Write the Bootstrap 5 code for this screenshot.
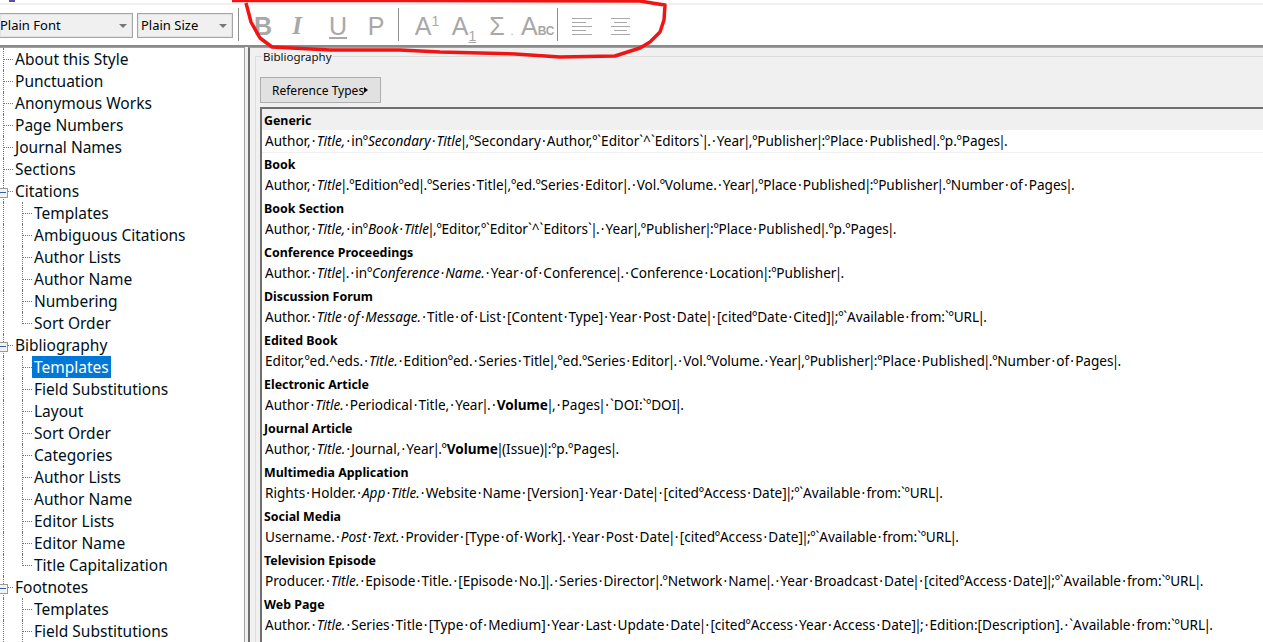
<!DOCTYPE html>
<html lang="en">
<head>
<meta charset="utf-8">
<title>Style editor</title>
<link href="https://cdn.jsdelivr.net/npm/bootstrap@5.3.0/dist/css/bootstrap.min.css" rel="stylesheet">
<style>
html,body{height:642px;overflow:hidden;background:#f0f0f0;}
body{font-family:"Noto Sans","Open Sans",sans-serif;color:#000;position:relative;}
.top-strip{height:5px;background:linear-gradient(#fff 0,#fff 3px,#f0f0f0 3px);padding-left:9px;}
.app-mark{display:block;width:6px;height:2px;background:#5a4fb0;}
.tool-bar{height:42px;background:#fff;border-bottom:2px solid #8a8a8a;}
.fake-select{height:25px;margin-top:8px;border:1px solid #a5a5a5;outline:1px solid #e3e3e3;outline-offset:-2px;background:#f0f0f0;font-size:13px;line-height:23px;padding-left:3px;white-space:nowrap;overflow:hidden;}
.font-sel{width:134px;margin-left:-1px;padding-left:0;}
.size-sel{width:96px;margin-left:4px;}
.caret-down{width:0;height:0;border:4px solid transparent;border-top:4px solid #777;border-bottom:0;margin-right:5px;}
.v-sep{width:1px;height:33px;background:#8e8e8e;margin-top:3px;flex:none;}
.tb-group{padding-top:8px;}
.tb-glyph{color:#a8a8a8;font-size:25px;line-height:26px;flex:none;text-align:center;font-family:"Liberation Sans",sans-serif;white-space:nowrap;}
.tb-serif{font-family:"Liberation Serif",serif;}
.tb-sup{font-size:14px;position:relative;top:-9px;}
.tb-sub{font-size:14px;position:relative;top:6px;text-decoration:underline;}
.tb-small{font-size:12px;font-weight:700;letter-spacing:-.5px;}
.tb-dot{font-size:11px;padding-top:5px;}
.tb-align{margin-top:9px;flex:none;}
.tree-pane{width:245px;height:595px;background:#fff;border:1px solid #a0a0a0;border-width:1px 1px 0 0;overflow:hidden;flex:none;}
.tree-row{height:22px;line-height:22px;font-size:15.5px;position:relative;padding-left:15px;white-space:nowrap;color:#001018;}
.tree-row::before{content:"";position:absolute;left:3px;top:0;bottom:0;border-left:1px dotted #777;}
.tree-row::after{content:"";position:absolute;left:4px;top:11px;width:9px;border-top:1px dotted #777;}
.tree-kid{padding-left:34px;}
.tree-kid::after{left:23px;}
.kid-line{position:absolute;left:22px;top:0;bottom:0;border-left:1px dotted #777;}
.kid-end{bottom:10px;}
.tree-box{position:absolute;left:-2px;top:8px;width:10px;height:10px;background:#f2f2f2;border:1px solid #9a9a9a;z-index:1;}
.tree-box::after{content:"";position:absolute;left:0;right:1px;top:3px;border-top:1px solid #3a5fa8;}
.tree-sel{background:#0078d7;color:#fff;padding:0 2px 0 2px;margin-left:-2px;display:inline-block;height:22px;}
.right-pane{margin-left:3px;flex:1;min-width:0;border-left:2px solid #6f6f6f;border-top:1px solid #a0a0a0;height:595px;padding:8px 0 0 5px;overflow:hidden;}
.group-frame{border:1px solid #dcdcdc;border-width:1px 0 0 1px;height:600px;padding:0 0 0 4px;position:relative;}
.group-label{position:absolute;left:6px;top:-7px;font-size:11.5px;line-height:14px;background:#f0f0f0;padding:0 1px;color:#111;}
.ref-btn{margin-top:20px;width:121px;height:26px;background:#e1e1e1;border:1px solid #adadad;border-radius:0;font-size:12px;line-height:26px;padding:0 0 0 11px;text-align:left;color:#000;white-space:nowrap;}
.ref-tri{display:inline-block;width:0;height:0;border:3px solid transparent;border-left:4px solid #000;border-right:0;vertical-align:2px;}
.tpl-box{margin-top:4px;background:#fff;border:2px solid #6f6f6f;border-width:2px 0 0 2px;height:560px;}
.tpl-item{height:44px;padding:3px 0 0 2px;white-space:nowrap;overflow:hidden;}
.tpl-on{background:#f0f0f0;}
.tpl-head{font-size:12.4px;font-weight:700;line-height:18px;height:18px;}
.tpl-line{font-size:13.6px;line-height:22px;height:22px;margin-left:-2px;padding-left:3px;background:#fff;}
.tpl-bar{margin:0 -1.75px;}
.tpl-dot{padding:0 1.15px;}
.tpl-deg{margin:0 -.5px;}
.red-scribble{position:absolute;left:0;top:0;pointer-events:none;z-index:5;}
</style>
</head>
<body>
<div class="top-strip"><span class="app-mark"></span></div>
<div class="tool-bar d-flex align-items-start">
  <div class="fake-select font-sel d-flex justify-content-between align-items-center"><span>Plain Font</span><span class="caret-down"></span></div>
  <div class="fake-select size-sel d-flex justify-content-between align-items-center"><span>Plain Size</span><span class="caret-down"></span></div>
  <div class="v-sep" style="margin-left:5px"></div>
  <div class="d-flex tb-group" style="margin-left:13px">
    <span class="tb-glyph fw-bold" style="width:22px">B</span>
    <span class="tb-glyph tb-serif fw-bold fst-italic" style="width:16px;margin-left:15px">I</span>
    <span class="tb-glyph text-decoration-underline" style="width:18px;margin-left:24px">U</span>
    <span class="tb-glyph" style="width:18px;margin-left:20px">P</span>
  </div>
  <div class="v-sep" style="margin-left:13px"></div>
  <div class="d-flex tb-group" style="margin-left:15px">
    <span class="tb-glyph" style="width:26px">A<span class="tb-sup">1</span></span>
    <span class="tb-glyph" style="width:26px;margin-left:11px">A<span class="tb-sub">1</span></span>
    <span class="tb-glyph" style="width:18px;margin-left:11px">Σ</span>
    <span class="tb-glyph tb-dot" style="width:8px;margin-left:2px">.</span>
    <span class="tb-glyph" style="width:30px;margin-left:5px">A<span class="tb-small">BC</span></span>
  </div>
  <div class="v-sep" style="margin-left:6px"></div>
  <svg class="tb-align" width="60" height="24" viewBox="0 0 60 24" style="margin-left:14px" aria-hidden="true">
    <g stroke="#a8a8a8" stroke-width="1">
      <path d="M0 4.5H20M0 8.5H14M0 12.5H20M0 16.5H14M0 20.5H20"/>
      <path d="M39 4.5H58M42 8.5H55M39 12.5H58M42 16.5H55M39 20.5H58"/>
    </g>
  </svg>
</div>
<div class="d-flex">
  <div class="tree-pane">
    <div class="tree-row">About this Style</div>
    <div class="tree-row">Punctuation</div>
    <div class="tree-row">Anonymous Works</div>
    <div class="tree-row">Page Numbers</div>
    <div class="tree-row">Journal Names</div>
    <div class="tree-row">Sections</div>
    <div class="tree-row"><i class="tree-box"></i>Citations</div>
    <div class="tree-row tree-kid"><i class="kid-line"></i>Templates</div>
    <div class="tree-row tree-kid"><i class="kid-line"></i>Ambiguous Citations</div>
    <div class="tree-row tree-kid"><i class="kid-line"></i>Author Lists</div>
    <div class="tree-row tree-kid"><i class="kid-line"></i>Author Name</div>
    <div class="tree-row tree-kid"><i class="kid-line"></i>Numbering</div>
    <div class="tree-row tree-kid"><i class="kid-line kid-end"></i>Sort Order</div>
    <div class="tree-row"><i class="tree-box"></i>Bibliography</div>
    <div class="tree-row tree-kid"><i class="kid-line"></i><span class="tree-sel">Templates</span></div>
    <div class="tree-row tree-kid"><i class="kid-line"></i>Field Substitutions</div>
    <div class="tree-row tree-kid"><i class="kid-line"></i>Layout</div>
    <div class="tree-row tree-kid"><i class="kid-line"></i>Sort Order</div>
    <div class="tree-row tree-kid"><i class="kid-line"></i>Categories</div>
    <div class="tree-row tree-kid"><i class="kid-line"></i>Author Lists</div>
    <div class="tree-row tree-kid"><i class="kid-line"></i>Author Name</div>
    <div class="tree-row tree-kid"><i class="kid-line"></i>Editor Lists</div>
    <div class="tree-row tree-kid"><i class="kid-line"></i>Editor Name</div>
    <div class="tree-row tree-kid"><i class="kid-line kid-end"></i>Title Capitalization</div>
    <div class="tree-row"><i class="tree-box"></i>Footnotes</div>
    <div class="tree-row tree-kid"><i class="kid-line"></i>Templates</div>
    <div class="tree-row tree-kid"><i class="kid-line"></i>Field Substitutions</div>
  </div>
  <div class="right-pane">
    <div class="group-frame">
      <span class="group-label">Bibliography</span>
      <button type="button" class="ref-btn d-block">Reference Types<span class="ref-tri"></span></button>
      <div class="tpl-box">
        <div class="tpl-item tpl-on"><div class="tpl-head">Generic</div><div class="tpl-line">Author,·<i>Title,</i>·in°<i>Secondary·Title</i>|,°Secondary·Author,°`Editor`^`Editors`|.·Year|,°Publisher|:°Place·Published|.°p.°Pages|.</div></div>
        <div class="tpl-item"><div class="tpl-head">Book</div><div class="tpl-line">Author,·<i>Title</i>|.°Edition°ed|.°Series·Title|,°ed.°Series·Editor|.·Vol.°Volume.·Year|,°Place·Published|:°Publisher|.°Number·of·Pages|.</div></div>
        <div class="tpl-item"><div class="tpl-head">Book Section</div><div class="tpl-line">Author,·<i>Title,</i>·in°<i>Book·Title</i>|,°Editor,°`Editor`^`Editors`|.·Year|,°Publisher|:°Place·Published|.°p.°Pages|.</div></div>
        <div class="tpl-item"><div class="tpl-head">Conference Proceedings</div><div class="tpl-line">Author.·<i>Title</i>|.·in°<i>Conference·Name.</i>·Year·of·Conference|.·Conference·Location|:°Publisher|.</div></div>
        <div class="tpl-item"><div class="tpl-head">Discussion Forum</div><div class="tpl-line">Author.·<i>Title·of·Message.</i>·Title·of·List·[Content·Type]·Year·Post·Date|·[cited°Date·Cited]|;°`Available·from:`°URL|.</div></div>
        <div class="tpl-item"><div class="tpl-head">Edited Book</div><div class="tpl-line">Editor,°ed.^eds.·<i>Title.</i>·Edition°ed.·Series·Title|,°ed.°Series·Editor|.·Vol.°Volume.·Year|,°Publisher|:°Place·Published|.°Number·of·Pages|.</div></div>
        <div class="tpl-item"><div class="tpl-head">Electronic Article</div><div class="tpl-line">Author·<i>Title.</i>·Periodical·Title,·Year|.·<b>Volume</b>|,·Pages|·`DOI:`°DOI|.</div></div>
        <div class="tpl-item"><div class="tpl-head">Journal Article</div><div class="tpl-line">Author,·<i>Title.</i>·Journal,·Year|.°<b>Volume</b>|(Issue)|:°p.°Pages|.</div></div>
        <div class="tpl-item"><div class="tpl-head">Multimedia Application</div><div class="tpl-line">Rights·Holder.·<i>App·Title.</i>·Website·Name·[Version]·Year·Date|·[cited°Access·Date]|;°`Available·from:`°URL|.</div></div>
        <div class="tpl-item"><div class="tpl-head">Social Media</div><div class="tpl-line">Username.·<i>Post·Text.</i>·Provider·[Type·of·Work].·Year·Post·Date|·[cited°Access·Date]|;°`Available·from:`°URL|.</div></div>
        <div class="tpl-item"><div class="tpl-head">Television Episode</div><div class="tpl-line">Producer.·<i>Title.</i>·Episode·Title.·[Episode·No.]|.·Series·Director|.°Network·Name|.·Year·Broadcast·Date|·[cited°Access·Date]|;°`Available·from:`°URL|.</div></div>
        <div class="tpl-item"><div class="tpl-head">Web Page</div><div class="tpl-line">Author.·<i>Title.</i>·Series·Title·[Type·of·Medium]·Year·Last·Update·Date|·[cited°Access·Year·Access·Date]|;·Edition:[Description].·`Available·from:`°URL|.</div></div>
      </div>
    </div>
  </div>
</div>
<svg class="red-scribble" width="1263" height="642" viewBox="0 0 1263 642" aria-hidden="true">
  <path d="M232 0.5H400L640 1L655 3.5L665 5L664 20L660 32L650 42L640 48L615 56L560 57L515 54L440 52L400 50L330 50L272 47L260 38L251 22L246 3" fill="none" stroke="#f01515" stroke-width="3.5" stroke-linejoin="round"/>
</svg>
<script>
var markClass={'|':'tpl-bar','·':'tpl-dot','°':'tpl-deg'};
document.querySelectorAll('.tpl-line').forEach(function(line){
  var walker=document.createTreeWalker(line,NodeFilter.SHOW_TEXT),nodes=[];
  while(walker.nextNode())nodes.push(walker.currentNode);
  nodes.forEach(function(n){
    var frag=document.createDocumentFragment();
    n.nodeValue.split(/([|·°])/).forEach(function(p){
      if(markClass[p]){var s=document.createElement('span');s.className=markClass[p];s.textContent=p;frag.appendChild(s);}
      else if(p)frag.appendChild(document.createTextNode(p));
    });
    n.parentNode.replaceChild(frag,n);
  });
});
</script>
</body>
</html>
